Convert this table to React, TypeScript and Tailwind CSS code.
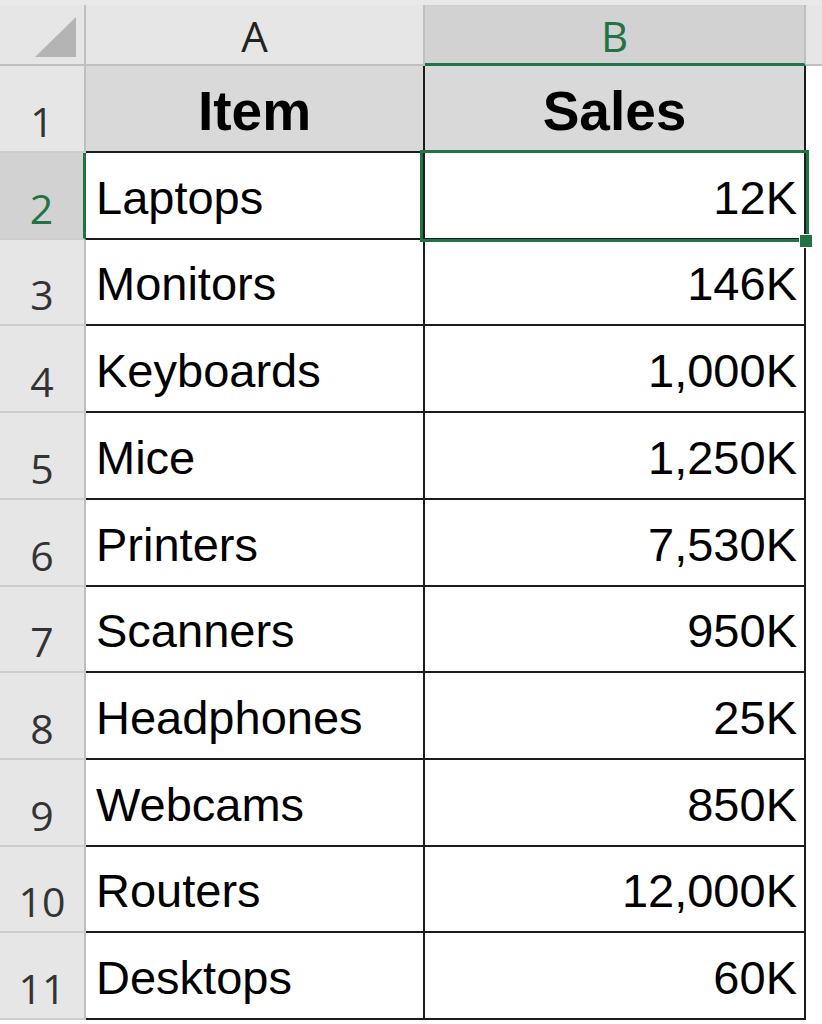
const rows = [
  { item: "Laptops", sales: "12K" },
  { item: "Monitors", sales: "146K" },
  { item: "Keyboards", sales: "1,000K" },
  { item: "Mice", sales: "1,250K" },
  { item: "Printers", sales: "7,530K" },
  { item: "Scanners", sales: "950K" },
  { item: "Headphones", sales: "25K" },
  { item: "Webcams", sales: "850K" },
  { item: "Routers", sales: "12,000K" },
  { item: "Desktops", sales: "60K" },
];

// row heights incl. the 2px bottom grid line, rows 1..11
const heights = [
  "h-[87px]",
  "h-[87px]",
  "h-[86px]",
  "h-[87px]",
  "h-[87px]",
  "h-[87px]",
  "h-[86px]",
  "h-[87px]",
  "h-[87px]",
  "h-[86px]",
  "h-[87px]",
];

const SELECTED_ROW = 2;

function RowHeader({ n }: { n: number }) {
  const selected = n === SELECTED_ROW;
  return (
    <div
      className={
        "flex h-full w-[86px] shrink-0 items-end justify-center border-b-2 border-b-[#cdcdcd] pb-[9px] font-['Open_Sans',sans-serif] text-[41px] leading-none " +
        (selected
          ? "border-r-[3px] border-r-[#217346] bg-[#d2d2d2] text-[#217346]"
          : "border-r-2 border-r-[#bfbfbf] bg-[#e6e6e6] text-[#333333]")
      }
    >
      {n}
    </div>
  );
}

export default function App() {
  return (
    <div className="relative h-[1024px] w-[822px] overflow-hidden bg-white font-['Liberation_Sans',Arial,sans-serif] text-black">
      {/* column headers */}
      <div className="flex h-[66px] bg-[#e9e9e9]">
        <div className="relative mt-[5px] h-[61px] w-[86px] shrink-0 border-b-2 border-r-2 border-[#bfbfbf] bg-[#e6e6e6]">
          <svg className="absolute left-[35px] top-[12px]" width="42" height="41" viewBox="0 0 42 41">
            <polygon points="41,0 41,40 0,40" fill="#b4b4b4" />
          </svg>
        </div>
        <div className="mt-[5px] flex h-[61px] w-[339px] shrink-0 items-end justify-center border-b-2 border-r-2 border-[#bfbfbf] bg-[#e6e6e6] pb-[7px] font-['Open_Sans',sans-serif] text-[42px] leading-none text-[#222222]">
          A
        </div>
        <div className="mt-[5px] flex h-[61px] w-[381px] shrink-0 items-end justify-center border-b-[3px] border-r-2 border-b-[#217346] border-r-[#bfbfbf] bg-[#d2d2d2] pb-[6px] font-['Open_Sans',sans-serif] text-[42px] leading-none text-[#217346]">
          B
        </div>
        <div className="mt-[5px] h-[61px] flex-1 border-b-2 border-[#bfbfbf] bg-[#e6e6e6]" />
      </div>

      {/* row 1: table header */}
      <div className={"flex " + heights[0]}>
        <RowHeader n={1} />
        <div className="flex h-full w-[339px] shrink-0 items-end justify-center border-b-2 border-r-2 border-[#1c1c1c] bg-[#d9d9d9] pb-[12px] text-[55px] font-bold leading-none">
          Item
        </div>
        <div className="flex h-full w-[381px] shrink-0 items-end justify-center border-b-2 border-r-2 border-[#1c1c1c] bg-[#d9d9d9] pb-[12px] text-[55px] font-bold leading-none">
          Sales
        </div>
        <div className="h-full flex-1" />
      </div>

      {rows.map((r, i) => (
        <div key={r.item} className={"flex " + heights[i + 1]}>
          <RowHeader n={i + 2} />
          <div className="flex h-full w-[339px] shrink-0 items-end border-b-2 border-r-2 border-[#1c1c1c] pb-[17px] pl-[10px] text-[47px] leading-none">
            {r.item}
          </div>
          <div className="flex h-full w-[381px] shrink-0 items-end justify-end border-b-2 border-r-2 border-[#1c1c1c] pb-[17px] pr-[7px] text-[47px] leading-none">
            {r.sales}
          </div>
          <div className="h-full flex-1" />
        </div>
      ))}

      {/* active cell B2 */}
      <div className="pointer-events-none absolute left-[420px] top-[150px] h-[92px] w-[389px] border-[3px] border-[#217346]" />
      <div className="pointer-events-none absolute left-[800px] top-[235px] h-[12px] w-[12px] bg-[#217346] ring-1 ring-white" />
    </div>
  );
}
